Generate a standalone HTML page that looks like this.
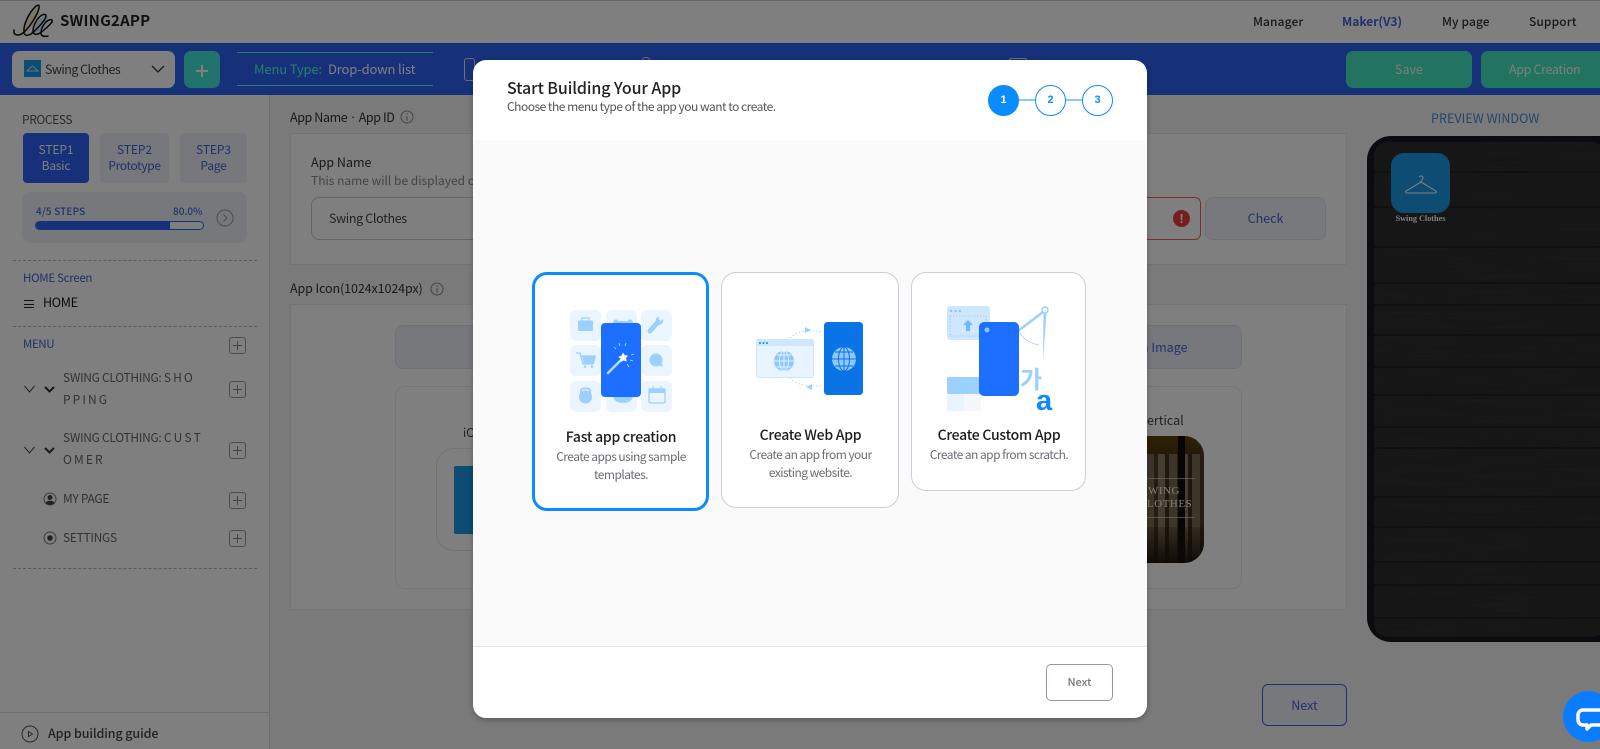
<!DOCTYPE html>
<html lang="en"><head><meta charset="utf-8"><title>Swing2App</title>
<style>
*{box-sizing:border-box}
html,body{margin:0;padding:0;width:1600px;height:749px;overflow:hidden;background:#f5f5f5;font-family:"Liberation Sans","Noto Sans CJK KR",sans-serif}
.a{position:absolute}
.t{position:absolute;white-space:nowrap;line-height:20px;font-family:"Noto Sans CJK KR","Liberation Sans",sans-serif}
.plus{position:absolute;left:229px;width:17px;height:17px;border:1px solid #999;border-radius:3px;background:#fff}
.plus:before{content:"";position:absolute;left:3px;right:3px;top:7px;height:1px;background:#888}
.plus:after{content:"";position:absolute;top:3px;bottom:3px;left:7px;width:1px;background:#888}
.blue{color:#3f63d8}
.menu{font-size:12px;letter-spacing:-.3px;color:#666}
.dash{position:absolute;left:13px;width:244px;border-top:1px dashed #a9b4d2}
.tile{position:absolute;width:31px;height:31px;border-radius:6px;background:#ebf5ff}
.ct{position:absolute;text-align:center;font-family:"Noto Sans CJK KR","Liberation Sans",sans-serif;white-space:nowrap}
.h{font-size:14px;font-weight:500;color:#1c1c1c;line-height:20px;letter-spacing:-.25px}
.d{font-size:12px;color:#6a6e76;line-height:18px;letter-spacing:-.55px}
.card{position:absolute;background:#fff;border:1px solid #c9ced8;border-radius:15px}
.c{position:absolute;width:31px;height:31px;top:85px;border-radius:50%;border:1px solid #0a8cff;color:#0a8cff;background:#fff;text-align:center;font-size:11px;font-weight:700;line-height:29px}
</style></head><body>

<!-- page under the overlay -->
<div class="a" style="left:0;top:0;width:1600px;height:43px;background:#fff;border-top:1px solid #ccc"></div>
<svg class="a" style="left:12px;top:4px" width="42" height="34" viewBox="0 0 42 34"><path d="M11 30C10 18 18 3 25 2c5-1 3 10-3 18-4 5-8 9-11 10z" fill="#f3eccb"/><path d="M22 29c0-8 7-17 13-17 3 0 0 8-4 12-3 3-6 5-9 5z" fill="#d3ecf6"/><g fill="none" stroke="#111" stroke-width="1.500" stroke-linecap="round"><path d="M2 26c-1 6 5 6 9 3 7-6 15-19 16-25 1-4-2-3-4-1-5 5-12 17-11 25 0 4 4 4 7 2 5-4 15-14 15-18 0-2-2-2-4-1-5 3-9 11-9 16 0 4 4 4 7 2 3-2 9-7 12-11 1-2-1-3-3-2-5 2-8 9-8 13 0 3 3 4 7 3"/></g></svg>
<div class="t" style="left:60px;top:11px;font-size:15px;font-weight:700;color:#222;letter-spacing:.2px">SWING2APP</div>
<div class="t" style="left:1253px;top:12px;font-size:12px;color:#333;font-weight:500;letter-spacing:.1px">Manager</div>
<div class="t" style="left:1342px;top:12px;font-size:12px;color:#3f63d8;font-weight:700">Maker(V3)</div>
<div class="t" style="left:1442px;top:12px;font-size:12px;color:#333;font-weight:500;letter-spacing:.1px">My page</div>
<div class="t" style="left:1529px;top:12px;font-size:12px;color:#333;font-weight:500;letter-spacing:.1px">Support</div>

<div class="a" style="left:0;top:43px;width:1600px;height:52px;background:#2c62f4"></div>
<div class="a" style="left:12px;top:51px;width:163px;height:37px;background:#fff;border-radius:7px"></div>
<div class="a" style="left:24px;top:60px;width:17px;height:17px;background:#1a9ae8"></div>
<svg class="a" style="left:26px;top:63px" width="13" height="10"><path d="M6.500 3L1 8h11z" fill="none" stroke="#fff" stroke-width=".8"/></svg>
<div class="t" style="left:45px;top:59px;font-size:12.500px;color:#444;letter-spacing:-.55px">Swing Clothes</div>
<svg class="a" style="left:151px;top:64px" width="14" height="10"><path d="M1 2l6 6 6-6" fill="none" stroke="#333" stroke-width="1.300"/></svg>
<div class="a" style="left:184px;top:51px;width:36px;height:37px;background:#4cffd6;border-radius:7px;opacity:.85"></div>
<div class="a" style="left:196px;top:70px;width:12px;height:2px;background:#fff"></div>
<div class="a" style="left:201px;top:65px;width:2px;height:12px;background:#fff"></div>
<div class="a" style="left:237px;top:52px;width:196px;height:34px;border-top:1px solid #4cffd6;border-bottom:1px solid #4cffd6"></div>
<div class="t" style="left:254px;top:59px;font-size:13px;color:#4cffd6;letter-spacing:-.15px">Menu Type:</div>
<div class="t" style="left:328px;top:59px;font-size:13px;color:#fff;letter-spacing:-.15px">Drop-down list</div>
<div class="a" style="left:464px;top:58px;width:11px;height:23px;border:1px solid #ddd;border-radius:3px"></div>
<div class="a" style="left:642px;top:57px;width:8px;height:6px;border:1px solid #ddd;border-radius:4px"></div>
<div class="a" style="left:1009px;top:58px;width:18px;height:6px;border:1px solid #ddd;border-radius:2px"></div>
<div class="a" style="left:1346px;top:51px;width:126px;height:37px;background:#44e6be;border-radius:7px"></div>
<div class="t" style="left:1346px;top:59px;width:126px;text-align:center;font-size:12.500px;color:#fff">Save</div>
<div class="a" style="left:1481px;top:51px;width:125px;height:37px;background:#44e6be;border-radius:7px"></div>
<div class="t" style="left:1509px;top:59px;font-size:12.500px;color:#fff;letter-spacing:-.35px">App Creation</div>

<!-- sidebar -->
<div class="a" style="left:0;top:95px;width:270px;height:654px;background:#fff;border-right:1px solid #ddd"></div>
<div class="t" style="left:22px;top:110px;font-size:12px;color:#555;letter-spacing:-.4px">PROCESS</div>
<div class="a" style="left:23px;top:133px;width:66px;height:50px;background:#2c62f4;border-radius:4px"></div>
<div class="a" style="left:100px;top:133px;width:69px;height:50px;background:#eef1f9;border-radius:4px"></div>
<div class="a" style="left:180px;top:133px;width:67px;height:50px;background:#eef1f9;border-radius:4px"></div>
<div class="t" style="left:23px;top:140px;width:66px;text-align:center;font-size:12px;color:#fff;letter-spacing:-.1px">STEP1</div>
<div class="t" style="left:23px;top:156px;width:66px;text-align:center;font-size:12px;color:#fff;letter-spacing:-.2px">Basic</div>
<div class="t blue" style="left:100px;top:140px;width:69px;text-align:center;font-size:12px;letter-spacing:-.1px">STEP2</div>
<div class="t blue" style="left:100px;top:156px;width:69px;text-align:center;font-size:12px;letter-spacing:-.35px">Prototype</div>
<div class="t blue" style="left:180px;top:140px;width:67px;text-align:center;font-size:12px;letter-spacing:-.1px">STEP3</div>
<div class="t blue" style="left:180px;top:156px;width:67px;text-align:center;font-size:12px;letter-spacing:-.2px">Page</div>
<div class="a" style="left:22px;top:192px;width:225px;height:51px;background:#eef1f9;border-radius:8px"></div>
<div class="t blue" style="left:36px;top:201px;font-size:10px;font-weight:500;letter-spacing:.15px">4/5 STEPS</div>
<div class="t blue" style="left:173px;top:201px;font-size:10px;font-weight:500">80.0%</div>
<div class="a" style="left:35px;top:221px;width:169px;height:9px;border:1px solid #2c62f4;border-radius:5px;background:#fff;overflow:hidden"><div style="width:134px;height:100%;background:#2c62f4"></div></div>
<svg class="a" style="left:216px;top:209px" width="18" height="18"><circle cx="9" cy="9" r="8" fill="none" stroke="#999"/><path d="M7.500 5.500l3.500 3.500-3.500 3.500" fill="none" stroke="#999"/></svg>
<div class="dash" style="top:260px"></div>
<div class="t blue" style="left:23px;top:268px;font-size:11.500px;letter-spacing:-.3px">HOME Screen</div>
<div class="a" style="left:24px;top:300px;width:10px;height:8px;border-top:1px solid #222;border-bottom:1px solid #222"><div style="height:1px;margin-top:2.500px;background:#222"></div></div>
<div class="t" style="left:43px;top:292px;font-size:12.500px;color:#111;letter-spacing:-.3px">HOME</div>
<div class="dash" style="top:326px"></div>
<div class="t blue" style="left:23px;top:334px;font-size:11.500px;letter-spacing:-.4px">MENU</div>
<div class="plus" style="top:337px"></div>
<svg class="a" style="left:23px;top:384px" width="34" height="12"><path d="M1.500 2l5 6 5-6" fill="none" stroke="#444" stroke-width="1"/><path d="M22 3l4.500 4.500L31 3" fill="none" stroke="#333" stroke-width="2"/></svg>
<div class="t menu" style="left:63px;top:368px">SWING CLOTHING: S H O</div>
<div class="t menu" style="left:63px;top:390px">P P I N G</div>
<div class="plus" style="top:381px"></div>
<svg class="a" style="left:23px;top:445px" width="34" height="12"><path d="M1.500 2l5 6 5-6" fill="none" stroke="#444" stroke-width="1"/><path d="M22 3l4.500 4.500L31 3" fill="none" stroke="#333" stroke-width="2"/></svg>
<div class="t menu" style="left:63px;top:428px">SWING CLOTHING: C U S T</div>
<div class="t menu" style="left:63px;top:450px">O M E R</div>
<div class="plus" style="top:442px"></div>
<svg class="a" style="left:43px;top:492px" width="14" height="14"><circle cx="7" cy="7" r="6" fill="#fff" stroke="#777"/><circle cx="7" cy="5.500" r="2.500" fill="#444"/><path d="M2.500 11c1-3 8-3 9 0-2 2.500-7 2.500-9 0z" fill="#444"/></svg>
<div class="t menu" style="left:63px;top:489px">MY PAGE</div>
<div class="plus" style="top:492px"></div>
<svg class="a" style="left:43px;top:531px" width="14" height="14"><circle cx="7" cy="7" r="6" fill="#fff" stroke="#777"/><circle cx="7" cy="7" r="2.800" fill="#444"/></svg>
<div class="t menu" style="left:63px;top:528px">SETTINGS</div>
<div class="plus" style="top:530px"></div>
<div class="dash" style="top:568px"></div>
<div class="a" style="left:0;top:712px;width:269px;border-top:1px solid #ddd"></div>
<svg class="a" style="left:21px;top:725px" width="18" height="18"><circle cx="9" cy="9" r="8" fill="none" stroke="#555"/><path d="M7.500 6.500l4 2.500-4 2.500z" fill="none" stroke="#555"/></svg>
<div class="t" style="left:48px;top:723px;font-size:12.500px;font-weight:500;color:#444;letter-spacing:-.1px">App building guide</div>

<!-- main -->
<div class="t" style="left:290px;top:107px;font-size:12.500px;color:#333;letter-spacing:-.4px">App Name · App ID</div>
<svg class="a" style="left:400px;top:110px" width="14" height="14"><circle cx="7" cy="7" r="6" fill="none" stroke="#888"/><path d="M7 6v4.500M7 3.500v1.200" stroke="#888"/></svg>
<div class="a" style="left:290px;top:133px;width:1057px;height:132px;background:#fff;border:1px solid #e6e6e6"></div>
<div class="t" style="left:311px;top:152px;font-size:12.500px;color:#333">App Name</div>
<div class="t" style="left:311px;top:171px;font-size:12px;color:#888">This name will be displayed on</div>
<div class="a" style="left:311px;top:197px;width:300px;height:43px;background:#fff;border:1px solid #ccc;border-radius:8px"></div>
<div class="t" style="left:329px;top:208px;font-size:12.500px;color:#444;letter-spacing:-.35px">Swing Clothes</div>
<div class="a" style="left:1100px;top:197px;width:101px;height:43px;background:#fff;border:1px solid #f06060;border-radius:6px"></div>
<div class="a" style="left:1173px;top:210px;width:17px;height:17px;border-radius:50%;background:#ee3b3b;color:#fff;text-align:center;font:700 13px/17px 'Liberation Sans',sans-serif">!</div>
<div class="a" style="left:1205px;top:197px;width:121px;height:43px;background:#f0f3fb;border:1px solid #dde1ec;border-radius:8px"></div>
<div class="t blue" style="left:1205px;top:208px;width:121px;text-align:center;font-size:12.500px">Check</div>

<div class="t" style="left:290px;top:278px;font-size:12.500px;color:#333;letter-spacing:-.1px">App Icon(1024x1024px)</div>
<svg class="a" style="left:430px;top:282px" width="14" height="14"><circle cx="7" cy="7" r="6" fill="none" stroke="#888"/><path d="M7 6v4.500M7 3.500v1.200" stroke="#888"/></svg>
<div class="a" style="left:290px;top:304px;width:1057px;height:306px;background:#fff;border:1px solid #e6e6e6"></div>
<div class="a" style="left:395px;top:325px;width:847px;height:44px;background:#eef1f9;border:1px solid #dde1ec;border-radius:8px"></div>
<div class="t blue" style="left:1141px;top:337px;font-size:12.500px">n Image</div>
<div class="a" style="left:395px;top:386px;width:847px;height:203px;background:#fff;border:1px solid #e8e8e8;border-radius:10px"></div>
<div class="t" style="left:463px;top:423px;font-size:12px;color:#444">iOS</div>
<div class="a" style="left:436px;top:448px;width:60px;height:103px;border:1px solid #e4e4e4;border-radius:18px"></div>
<div class="a" style="left:454px;top:466px;width:30px;height:68px;background:#1a9ae8;border-radius:2px"></div>
<div class="t" style="left:1140px;top:410px;font-size:12.500px;color:#444">Vertical</div>
<div class="a" style="left:1100px;top:436px;width:104px;height:127px;border-radius:0 20px 20px 0;overflow:hidden;background:repeating-linear-gradient(90deg,#7a6a54 0 8px,#4a3826 8px 12px,#8a7a64 12px 19px,#3e2e1c 19px 23px)">
<div style="position:absolute;left:0;top:0;right:0;height:18px;background:linear-gradient(#5c4208,#4a3610)"></div>
<div style="position:absolute;left:78px;top:0;width:7px;bottom:0;background:#0f0d0a"></div>
<div style="position:absolute;left:0;bottom:0;right:0;height:36px;background:linear-gradient(rgba(30,18,10,.2),rgba(30,18,10,.95))"></div>
</div>
<div class="a" style="left:1100px;top:478px;width:95px;border-top:1px solid #ccc;opacity:.7"></div>
<div class="a" style="left:1100px;top:517px;width:95px;border-top:1px solid #ccc;opacity:.7"></div>
<div class="a" style="left:1148px;top:484px;font:11px/14px 'Liberation Serif',serif;color:#fff;letter-spacing:.5px;white-space:nowrap">WING</div>
<div class="a" style="left:1147px;top:497px;font:11px/14px 'Liberation Serif',serif;color:#fff;letter-spacing:.5px;white-space:nowrap">LOTHES</div>

<div class="a" style="left:1262px;top:684px;width:85px;height:42px;background:#eef1f9;border:1px solid #3f63d8;border-radius:6px"></div>
<div class="t blue" style="left:1262px;top:695px;width:85px;text-align:center;font-size:12.500px">Next</div>

<!-- preview -->
<div class="t" style="left:1431px;top:108px;font-size:12.500px;color:#4a88d8;letter-spacing:.05px">PREVIEW WINDOW</div>
<div class="a" style="left:1367px;top:136px;width:260px;height:506px;background:#14181f;border-radius:24px"></div>
<svg class="a" style="left:1374px;top:142px;border-radius:14px" width="232" height="495">
<filter id="w" x="0" y="0" width="100%" height="100%"><feTurbulence type="fractalNoise" baseFrequency=".012 .45" numOctaves="3" seed="4"/><feColorMatrix values="0 0 0 0 1 0 0 0 0 1 0 0 0 0 1 0 0 0 .35 -.08"/></filter>
<rect width="232" height="495" fill="#2c2c2c"/><rect width="232" height="495" filter="url(#w)" opacity=".1"/>
<path d="M0 30H232M0 65H232M0 105H232M0 141H232M0 163H232M0 193H232M0 225H232M0 253H232M0 285H232M0 306H232M0 355H232M0 385H232M0 420H232M0 443H232M0 476H232" stroke="#141414" stroke-width="1" fill="none"/></svg>
<div class="a" style="left:1391px;top:153px;width:59px;height:60px;background:#1a9ae8;border-radius:13px"></div>
<svg class="a" style="left:1404px;top:172px" width="34" height="24" viewBox="0 0 34 24"><path d="M17 10c0-2 2-2 2-4s-3-3-4-1M17 10L2 19c-1 1 0 2 1 2h28c1 0 2-1 1-2z" fill="none" stroke="#fff" stroke-width="1.100"/></svg>
<div class="a" style="left:1391px;top:212px;width:59px;text-align:center;font:700 8.200px/14px 'Liberation Serif',serif;color:#fff;white-space:nowrap">Swing Clothes</div>

<!-- overlay -->
<div class="a" style="left:0;top:0;width:1600px;height:749px;background:rgba(0,0,0,.5)"></div>

<!-- modal -->
<div class="a" style="left:473px;top:60px;width:674px;height:658px;background:#fff;border-radius:13px;overflow:hidden;box-shadow:0 2px 6px rgba(0,0,0,.25)">
  <div class="a" style="left:0;top:80px;width:674px;height:507px;background:#fafafa;border-bottom:1px solid #e3e3e3"></div>
</div>
<div class="t" style="left:507px;top:77px;font-size:16px;font-weight:500;color:#222;letter-spacing:-.1px">Start Building Your App</div>
<div class="t" style="left:507px;top:97px;font-size:12px;color:#555;letter-spacing:-.5px">Choose the menu type of the app you want to create.</div>
<div class="a" style="left:1018px;top:99px;width:66px;height:2px;background:#8cc8ff"></div>
<div class="c" style="left:988px;background:#0a8cff;color:#fff">1</div>
<div class="c" style="left:1035px">2</div>
<div class="c" style="left:1082px">3</div>

<!-- card 1 -->
<div class="card" style="left:532px;top:272px;width:177px;height:239px;border:3px solid #0a8cff"></div>
<div class="tile" style="left:570px;top:310px"></div><div class="tile" style="left:606px;top:310px"></div><div class="tile" style="left:641px;top:310px"></div>
<div class="tile" style="left:570px;top:345px"></div><div class="tile" style="left:641px;top:345px"></div>
<div class="tile" style="left:570px;top:381px"></div><div class="tile" style="left:606px;top:381px"></div><div class="tile" style="left:641px;top:381px"></div>
<svg class="a" style="left:570px;top:305px" width="105" height="110" viewBox="0 0 105 110">
<rect x="8" y="15.500" width="15" height="10.500" rx="1" fill="#9bd0ff"/><path d="M12 15.500v-2.500h7v2.500" fill="none" stroke="#9bd0ff" stroke-width="1.200"/>
<path d="M43 19c0-5 4-6 5-3h10c1-3 5-2 5 3z" fill="#9bd0ff"/>
<path d="M80 26l8-9" stroke="#9bd0ff" stroke-width="5" stroke-linecap="round"/><path d="M86 17c-1-3 1-5 3-5v3l2 1 2-2c1 3-1 6-5 6z" fill="#9bd0ff"/>
<path d="M6 48h4l3 11h10l2-8H11" fill="none" stroke="#9bd0ff" stroke-width="1.300"/><path d="M12 51h14l-2 8H14z" fill="#9bd0ff"/><circle cx="15" cy="61.500" r="1.300" fill="#9bd0ff"/><circle cx="22" cy="61.500" r="1.300" fill="#9bd0ff"/>
<circle cx="86" cy="55" r="6.500" fill="#9bd0ff"/><path d="M88 60l5 2-2-5z" fill="#9bd0ff"/>
<circle cx="15.500" cy="92" r="6.500" fill="#9bd0ff"/><rect x="11" y="83.500" width="9" height="6" rx="2.500" fill="none" stroke="#9bd0ff" stroke-width="2"/>
<path d="M43 90h20c0 5-4 8-10 8s-10-3-10-8z" fill="#9bd0ff"/>
<rect x="79" y="84" width="16" height="14" rx="1.500" fill="none" stroke="#9bd0ff" stroke-width="1.300"/><path d="M79 84h16v3.500H79zM83 81v3M91 81v3" fill="#9bd0ff" stroke="#9bd0ff" stroke-width="1"/>
<rect x="31" y="18" width="40" height="74" rx="4" fill="#1c6fff"/>
<path d="M38 68l14-14" stroke="#b5dcff" stroke-width="2.500" stroke-linecap="round"/>
<path d="M53 47.500l1.700 2.800 3.300 .2-2 2.700 .8 3.300-3.300-1-2.800 1.700 0-3.300-2.500-2.100 3.200-1z" fill="#fff"/>
<path d="M46 44l-2-2M50 41l-1-3M55 41l1-3M61 50l3-1M60 55l3 1M57 59l2 3" stroke="#b5dcff" stroke-width=".8" fill="none"/>
</svg>
<div class="ct h" style="left:533px;width:176px;top:427px">Fast app creation</div>
<div class="ct d" style="left:533px;width:176px;top:448px">Create apps using sample</div>
<div class="ct d" style="left:533px;width:176px;top:466px">templates.</div>

<!-- card 2 -->
<div class="card" style="left:721px;top:272px;width:178px;height:236px"></div>
<svg class="a" style="left:750px;top:315px" width="120" height="85" viewBox="0 0 120 85">
<path d="M40 23c5-6 18-9 33-6M40 63c5 6 18 10 33 7" fill="none" stroke="#9bd0ff" stroke-width=".8" stroke-dasharray="1.500 2"/>
<path d="M55 12l6 3-6 3zM62 69l-6 3 6 3z" fill="#9bd0ff"/>
<rect x="6.500" y="24.500" width="57" height="38" rx="2" fill="#e8f4ff" stroke="#cfe6ff"/>
<path d="M6.500 31V26.500a2 2 0 0 1 2-2h53a2 2 0 0 1 2 2V31z" fill="#cfe6ff"/>
<circle cx="10" cy="28" r="1" fill="#0a8cff"/><circle cx="13.500" cy="28" r="1" fill="#0a8cff"/><circle cx="17" cy="28" r="1" fill="#0a8cff"/>
<circle cx="34" cy="46" r="10" fill="#8cc8ff"/><path d="M24 46h20M34 36v20M27 40h14M27 52h14" stroke="#e8f4ff" stroke-width=".9"/><ellipse cx="34" cy="46" rx="4.500" ry="10" fill="none" stroke="#e8f4ff" stroke-width=".9"/>
<rect x="74" y="7" width="39" height="73" rx="3.500" fill="#0a73e6"/>
<circle cx="94" cy="44" r="12" fill="#8cc8ff"/><path d="M82 44h24M94 32v24M85 37h18M85 51h18" stroke="#0a73e6" stroke-width="1"/><ellipse cx="94" cy="44" rx="5.500" ry="12" fill="none" stroke="#0a73e6" stroke-width="1"/>
</svg>
<div class="ct h" style="left:722px;width:177px;top:425px">Create Web App</div>
<div class="ct d" style="left:722px;width:177px;top:446px">Create an app from your</div>
<div class="ct d" style="left:722px;width:177px;top:464px">existing website.</div>

<!-- card 3 -->
<div class="card" style="left:911px;top:272px;width:175px;height:219px"></div>
<svg class="a" style="left:945px;top:303px" width="115" height="112" viewBox="0 0 115 112">
<rect x="2" y="3" width="43" height="34" rx="3" fill="#cfe6ff"/>
<circle cx="6" cy="8" r="1.300" fill="#8cc8ff"/><circle cx="10.500" cy="8" r="1.300" fill="#8cc8ff"/><circle cx="15" cy="8" r="1.300" fill="#8cc8ff"/>
<rect x="5" y="13" width="36" height="20" fill="none" stroke="#8cc8ff" stroke-width=".8" stroke-dasharray="1.500 1.500"/>
<path d="M23 17l5 5h-3v6h-4v-6h-3z" fill="#6db8ff"/>
<rect x="2" y="74" width="34" height="17" rx="2" fill="#9bd0ff"/><rect x="2" y="91" width="17" height="17" fill="#e8f4ff"/><rect x="19" y="91" width="17" height="17" fill="#f4f8fc"/>
<path d="M98 9L73 28" stroke="#9bd0ff" stroke-width="2.500" fill="none"/><path d="M98.500 10h3L98 58z" fill="#9bd0ff"/>
<circle cx="100" cy="7" r="3" fill="#fff" stroke="#9bd0ff" stroke-width="1.500"/>
<path d="M74 28c3 7 10 12 20 14" fill="none" stroke="#9bd0ff" stroke-width=".8"/>
<rect x="34" y="19" width="40" height="74" rx="5" fill="#1c6fff"/><circle cx="42" cy="27" r="2.500" fill="#8cc8ff"/>
<text x="75" y="85" font-family="'Noto Sans CJK KR',sans-serif" font-size="24" font-weight="700" fill="#9bd0ff">가</text>
<text x="91" y="107" font-family="'Liberation Sans',sans-serif" font-size="29" font-weight="700" fill="#0a8cff">a</text>
</svg>
<div class="ct h" style="left:912px;width:174px;top:425px">Create Custom App</div>
<div class="ct d" style="left:912px;width:174px;top:446px">Create an app from scratch.</div>

<div class="a" style="left:1046px;top:664px;width:67px;height:37px;background:#fff;border:1px solid #8f99ab;border-radius:5px;text-align:center;font:500 11px/35px 'Noto Sans CJK KR',sans-serif;color:#777">Next</div>

<!-- chat -->
<div class="a" style="left:1563px;top:691px;width:51px;height:51px;border-radius:50%;background:#0a7cff"></div>
<svg class="a" style="left:1574px;top:705px" width="26" height="30"><path d="M9 5h20v15H17l-4 4v-4H9a5 5 0 0 1-5-5V10a5 5 0 0 1 5-5z" fill="none" stroke="#fff" stroke-width="3.500" stroke-linejoin="round"/></svg>
</body></html>
